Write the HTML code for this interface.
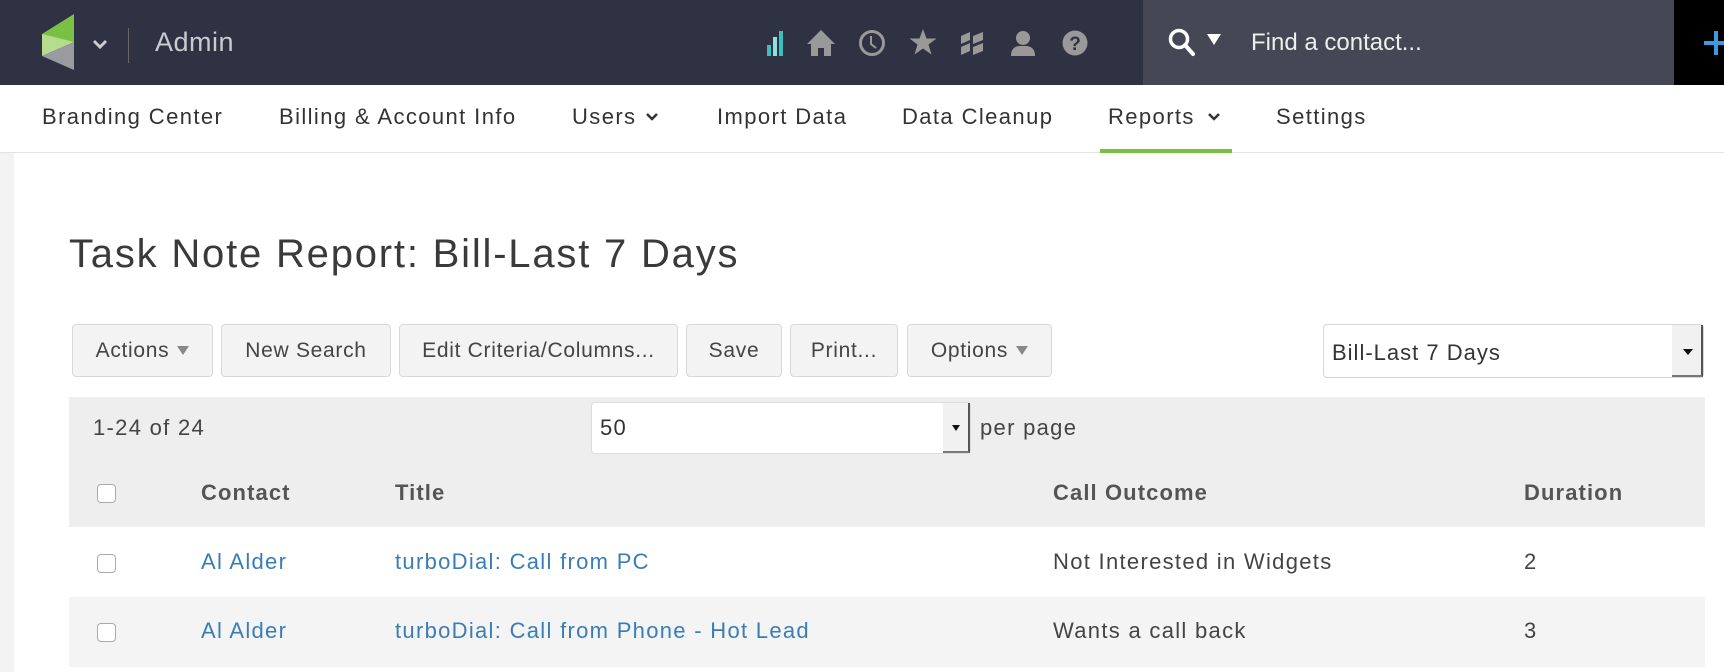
<!DOCTYPE html>
<html><head><meta charset="utf-8"><style>
*{margin:0;padding:0;box-sizing:border-box}
body{width:1724px;height:672px;overflow:hidden;background:#fff;font-family:"Liberation Sans",sans-serif;position:relative;color:#444}
.a{position:absolute;white-space:nowrap}
.hdr{left:0;top:0;width:1724px;height:85px;background:#2f3242}
.nav{font-size:22px;color:#333;top:104px;letter-spacing:1.4px}
.btn{position:absolute;top:324px;height:53px;background:#f3f3f3;border:1px solid #d8d8d8;border-radius:4px;font-size:21px;color:#444;display:flex;align-items:center;justify-content:center;letter-spacing:0.7px}
.tri{display:inline-block;width:0;height:0;border-left:6px solid transparent;border-right:6px solid transparent;border-top:9px solid #888;margin-left:8px}
.cb{position:absolute;width:19px;height:19px;border:1px solid #aaa;border-radius:4px;background:#fff}
.td{font-size:22px;color:#444;letter-spacing:1.3px}
.lk{font-size:22px;color:#3a7db5;letter-spacing:1.3px}
.th{font-size:22px;font-weight:bold;color:#555;letter-spacing:1.1px}
</style></head><body>
<div class="a hdr"></div>
<svg class="a" style="left:40px;top:14px" width="36" height="56" viewBox="0 0 36 56">
<polygon points="2,20 34,0 34,28 2,28" fill="#7ac143"/>
<polygon points="2,20 34,28 2,42" fill="#b6dc8e"/>
<polygon points="2,42 34,28 34,56" fill="#9a9ba0"/>
</svg>
<svg class="a" style="left:92px;top:38px" width="16" height="12"><polyline points="2,3 8,9 14,3" fill="none" stroke="#ccc" stroke-width="3"/></svg>
<div class="a" style="left:128px;top:28px;width:1px;height:35px;background:#666"></div>
<div class="a" style="left:155px;top:27px;font-size:27px;color:#c9cbd0;letter-spacing:0.5px">Admin</div>
<svg class="a" style="left:766px;top:29px" width="20" height="28"><rect x="1" y="16" width="4" height="11" fill="#3dbfc0"/><rect x="7" y="8" width="4" height="19" fill="#8fe0e0"/><rect x="13" y="2" width="4" height="25" fill="#3dbfc0"/></svg>
<svg class="a" style="left:806px;top:29px" width="30" height="28" viewBox="0 0 30 28"><polygon points="15,1 29,15 25,15 25,27 18,27 18,19 12,19 12,27 5,27 5,15 1,15" fill="#999"/></svg>
<svg class="a" style="left:858px;top:29px" width="28" height="28"><circle cx="14" cy="14" r="11.5" fill="none" stroke="#999" stroke-width="3"/><polyline points="13,7 13,15 18,19" fill="none" stroke="#999" stroke-width="2"/></svg>
<svg class="a" style="left:908px;top:28px" width="30" height="28" viewBox="0 0 30 28"><polygon points="15,1 18.5,10.5 28.5,10.5 20.5,16.5 23.5,26.5 15,20.5 6.5,26.5 9.5,16.5 1.5,10.5 11.5,10.5" fill="#999"/></svg>
<svg class="a" style="left:960px;top:30px" width="24" height="26"><polygon points="1,6 10,2 10,10 1,14" fill="#999"/><polygon points="13,6 23,2 23,10 13,14" fill="#999"/><polygon points="1,17 10,13 10,21 1,25" fill="#999"/><polygon points="13,17 23,13 23,21 13,25" fill="#999"/></svg>
<svg class="a" style="left:1008px;top:29px" width="30" height="28"><circle cx="15" cy="9" r="7" fill="#999"/><path d="M3 27 Q3 18 11 17 L19 17 Q27 18 27 27 Z" fill="#999"/></svg>
<svg class="a" style="left:1062px;top:30px" width="26" height="26"><circle cx="13" cy="13" r="12.5" fill="#999"/><text x="13" y="20" font-size="19" font-weight="bold" text-anchor="middle" fill="#2f3242" font-family="Liberation Sans">?</text></svg>
<div class="a" style="left:1143px;top:0;width:531px;height:85px;background:#454755"></div>
<div class="a" style="left:1674px;top:0;width:50px;height:85px;background:#000"></div>
<svg class="a" style="left:1168px;top:28px" width="30" height="32"><circle cx="11" cy="11" r="8.5" fill="none" stroke="#fff" stroke-width="3.5"/><line x1="17" y1="17" x2="25" y2="26" stroke="#fff" stroke-width="4" stroke-linecap="round"/></svg>
<div class="a" style="left:1207px;top:34px;width:0;height:0;border-left:7px solid transparent;border-right:7px solid transparent;border-top:11px solid #fff"></div>
<div class="a" style="left:1251px;top:29px;font-size:24px;color:#eee">Find a contact...</div>
<div class="a" style="left:1704px;top:41px;width:24px;height:4px;background:#3b9bdc"></div>
<div class="a" style="left:1714px;top:31px;width:4px;height:24px;background:#3b9bdc"></div>
<div class="a" style="left:0;top:152px;width:1724px;height:1px;background:#e2e2e2"></div>
<div class="a nav" style="left:42px">Branding Center</div>
<div class="a nav" style="left:279px">Billing &amp; Account Info</div>
<div class="a nav" style="left:572px">Users</div>
<svg class="a" style="left:645px;top:112px" width="14" height="10"><polyline points="2,2 7,7 12,2" fill="none" stroke="#333" stroke-width="2.5"/></svg>
<div class="a nav" style="left:717px">Import Data</div>
<div class="a nav" style="left:902px">Data Cleanup</div>
<div class="a nav" style="left:1108px">Reports</div>
<svg class="a" style="left:1207px;top:112px" width="14" height="10"><polyline points="2,2 7,7 12,2" fill="none" stroke="#333" stroke-width="2.5"/></svg>
<div class="a" style="left:1100px;top:149px;width:132px;height:4px;background:#7ac143"></div>
<div class="a nav" style="left:1276px">Settings</div>
<div class="a" style="left:0;top:153px;width:14px;height:519px;background:#f3f3f3"></div>
<div class="a" style="left:69px;top:232px;font-size:40px;color:#3a3a3a;letter-spacing:1.8px">Task Note Report: Bill-Last 7 Days</div>
<div class="btn" style="left:72px;width:141px">Actions<span class="tri"></span></div>
<div class="btn" style="left:221px;width:170px">New Search</div>
<div class="btn" style="left:399px;width:279px">Edit Criteria/Columns...</div>
<div class="btn" style="left:686px;width:96px">Save</div>
<div class="btn" style="left:790px;width:108px">Print...</div>
<div class="btn" style="left:907px;width:145px">Options<span class="tri"></span></div>
<div class="a" style="left:1323px;top:324px;width:381px;height:54px;border:1px solid #d6d6d6;border-radius:4px;background:#fff"></div>
<div class="a" style="left:1672px;top:325px;width:31px;height:52px;background:#f1f1f1;border-right:2px solid #555;border-bottom:2px solid #777"></div>
<div class="a" style="left:1683px;top:349px;width:0;height:0;border-left:5px solid transparent;border-right:5px solid transparent;border-top:6px solid #111"></div>
<div class="a" style="left:1332px;top:340px;font-size:22px;color:#333;letter-spacing:1px">Bill-Last 7 Days</div>
<div class="a" style="left:69px;top:397px;width:1636px;height:130px;background:#eeeeee"></div>
<div class="a td" style="left:93px;top:415px">1-24 of 24</div>
<div class="a" style="left:591px;top:402px;width:380px;height:52px;border:1px solid #ddd;border-radius:4px;background:#fff"></div>
<div class="a" style="left:943px;top:403px;width:27px;height:50px;background:#f1f1f1;border-right:2px solid #555;border-bottom:2px solid #777"></div>
<div class="a" style="left:952px;top:425px;width:0;height:0;border-left:4px solid transparent;border-right:4px solid transparent;border-top:6px solid #111"></div>
<div class="a td" style="left:600px;top:415px;color:#333">50</div>
<div class="a td" style="left:980px;top:415px">per page</div>
<div class="cb" style="left:97px;top:484px"></div>
<div class="a th" style="left:201px;top:480px">Contact</div>
<div class="a th" style="left:395px;top:480px">Title</div>
<div class="a th" style="left:1053px;top:480px">Call Outcome</div>
<div class="a th" style="left:1524px;top:480px">Duration</div>
<div class="cb" style="left:97px;top:554px"></div>
<div class="a lk" style="left:201px;top:549px">Al Alder</div>
<div class="a lk" style="left:395px;top:549px">turboDial: Call from PC</div>
<div class="a td" style="left:1053px;top:549px">Not Interested in Widgets</div>
<div class="a td" style="left:1524px;top:549px">2</div>
<div class="a" style="left:69px;top:597px;width:1636px;height:70px;background:#f4f4f4"></div>
<div class="cb" style="left:97px;top:623px"></div>
<div class="a lk" style="left:201px;top:618px">Al Alder</div>
<div class="a lk" style="left:395px;top:618px">turboDial: Call from Phone - Hot Lead</div>
<div class="a td" style="left:1053px;top:618px">Wants a call back</div>
<div class="a td" style="left:1524px;top:618px">3</div>
</body></html>
